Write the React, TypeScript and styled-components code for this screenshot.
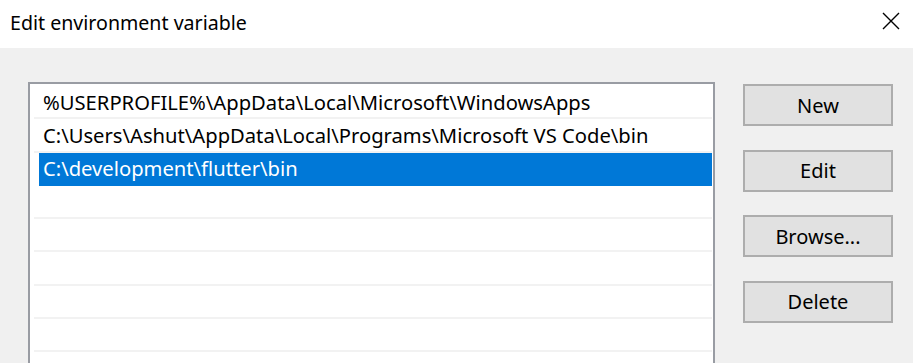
import styled, { createGlobalStyle } from 'styled-components';

const GlobalStyle = createGlobalStyle`
  html, body {
    margin: 0;
    padding: 0;
    background: #f0f0f0;
    font-family: "Noto Sans", "Open Sans", sans-serif;
  }
`;

const Dialog = styled.div`
  width: 913px;
  height: 363px;
  display: flex;
  flex-direction: column;
  overflow: hidden;
`;

const TitleBar = styled.div`
  height: 48px;
  background: #ffffff;
  display: flex;
  justify-content: space-between;
  align-items: center;
  padding: 0 12px 0 10px;
  box-sizing: border-box;
  flex-shrink: 0;
`;

const Title = styled.span`
  font-size: 19.6px;
  color: #000;
  margin-top: -4px;
`;

const CloseButton = styled.div`
  width: 20px;
  height: 20px;
  display: flex;
  align-items: center;
  justify-content: center;
  margin-top: -6px;
`;

const Body = styled.div`
  flex: 1;
  background: #f0f0f0;
  display: flex;
  padding: 34px 0 0 28px;
  gap: 28px;
  overflow: hidden;
`;

const ListBox = styled.div`
  width: 687px;
  height: 320px;
  box-sizing: border-box;
  background: #ffffff;
  border: 2px solid #999ca3;
  border-bottom: none;
  padding: 2px 1px 0 4px;
  flex-shrink: 0;
`;

const Row = styled.div<{ $selected?: boolean }>`
  height: 33.3px;
  box-sizing: border-box;
  display: flex;
  align-items: center;
  padding-left: ${(p) => (p.$selected ? '4px' : '9px')};
  margin-left: ${(p) => (p.$selected ? '5px' : '0')};
  border-bottom: 2px solid ${(p) => (p.$selected ? '#0078d7' : '#f2f2f2')};
  background: ${(p) => (p.$selected ? '#0078d7' : 'transparent')};
  color: ${(p) => (p.$selected ? '#ffffff' : '#000000')};
  font-size: 20.2px;
  white-space: nowrap;
`;

const ButtonColumn = styled.div`
  display: flex;
  flex-direction: column;
  gap: 23.5px;
  padding-top: 2px;
`;

const Button = styled.div`
  width: 150px;
  height: 42px;
  box-sizing: border-box;
  background: #e1e1e1;
  border: 2px solid #adadad;
  display: flex;
  align-items: center;
  justify-content: center;
  font-size: 20px;
  color: #000;
`;

const entries = [
  '%USERPROFILE%\\AppData\\Local\\Microsoft\\WindowsApps',
  'C:\\Users\\Ashut\\AppData\\Local\\Programs\\Microsoft VS Code\\bin',
  'C:\\development\\flutter\\bin',
  '',
  '',
  '',
  '',
  '',
  '',
];

const App = () => {
  return (
    <Dialog>
      <GlobalStyle />
      <TitleBar>
        <Title>Edit environment variable</Title>
        <CloseButton>
          <svg width="18" height="18" viewBox="0 0 18 18">
            <path d="M1 1 L17 17 M17 1 L1 17" stroke="#000" strokeWidth="1.4" fill="none" />
          </svg>
        </CloseButton>
      </TitleBar>
      <Body>
        <ListBox>
          {entries.map((e, i) => (
            <Row key={i} $selected={i === 2}>
              {e}
            </Row>
          ))}
        </ListBox>
        <ButtonColumn>
          <Button>New</Button>
          <Button>Edit</Button>
          <Button>Browse...</Button>
          <Button>Delete</Button>
        </ButtonColumn>
      </Body>
    </Dialog>
  );
};

export default App;
